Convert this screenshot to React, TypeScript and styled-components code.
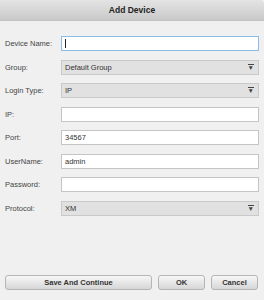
import React from "react";
import styled, { createGlobalStyle } from "styled-components";

const GlobalStyle = createGlobalStyle`
  html, body {
    margin: 0;
    padding: 0;
    background: #f0f0f0;
  }
  * {
    box-sizing: border-box;
  }
`;

type Field = {
  label: string;
  kind: "text" | "select";
  value?: string;
  focused?: boolean;
};

const fields: Field[] = [
  { label: "Device Name:", kind: "text", focused: true },
  { label: "Group:", kind: "select", value: "Default Group" },
  { label: "Login Type:", kind: "select", value: "IP" },
  { label: "IP:", kind: "text" },
  { label: "Port:", kind: "text", value: "34567" },
  { label: "UserName:", kind: "text", value: "admin" },
  { label: "Password:", kind: "text" },
  { label: "Protocol:", kind: "select", value: "XM" },
];

function App() {
  return (
    <React.Fragment>
      <GlobalStyle />
      <Window>
        <TitleBar>Add Device</TitleBar>
        <Form>
          {fields.map((field) => (
            <Row key={field.label}>
              <Label>{field.label}</Label>
              {field.kind === "select" ? (
                <Select>
                  <span>{field.value}</span>
                  <Arrow>▼</Arrow>
                </Select>
              ) : (
                <TextBox $focused={field.focused}>
                  {field.value}
                  {field.focused && <Caret />}
                </TextBox>
              )}
            </Row>
          ))}
        </Form>
        <Footer>
          <Button $width={147}>Save And Continue</Button>
          <Button $width={47}>OK</Button>
          <Button $width={47}>Cancel</Button>
        </Footer>
      </Window>
    </React.Fragment>
  );
}

export default App;

const Window = styled.div`
  width: 264px;
  height: 300px;
  display: flex;
  flex-direction: column;
  background: #f0f0f0;
  font-family: "Liberation Sans", Arial, sans-serif;
`;

const TitleBar = styled.div`
  height: 21px;
  display: flex;
  align-items: center;
  justify-content: center;
  background: linear-gradient(to bottom, #e4e4e4, #c9c9c9);
  border-top-right-radius: 4px;
  border-bottom: 1px solid #c2c2c2;
  font-size: 8.5px;
  font-weight: bold;
  color: #222;
`;

const Form = styled.div`
  display: flex;
  flex-direction: column;
  gap: 8.5px;
  padding: 15px 5px 0 5px;
`;

const Row = styled.div`
  display: grid;
  grid-template-columns: 56px 198px;
  align-items: center;
`;

const Label = styled.div`
  font-size: 7.5px;
  color: #444;
`;

const TextBox = styled.div<{ $focused?: boolean }>`
  height: 15px;
  display: flex;
  align-items: center;
  padding: 0 3px;
  background: #ffffff;
  border: 1px solid ${(p) => (p.$focused ? "#8cbde6" : "#c4c4c4")};
  font-size: 7.5px;
  color: #333;
`;

const Caret = styled.span`
  width: 1px;
  height: 9px;
  background: #222;
`;

const Select = styled.div`
  height: 15px;
  display: flex;
  align-items: center;
  justify-content: space-between;
  padding: 0 4px 0 3px;
  background: #e1e1e1;
  border: 1px solid #c9c9c9;
  font-size: 7.5px;
  color: #333;
`;

const Arrow = styled.span`
  font-size: 6.5px;
  color: #444;
  border-top: 1px solid #444;
  line-height: 6px;
`;

const Footer = styled.div`
  margin-top: auto;
  display: flex;
  gap: 6px;
  padding: 0 5px 10px 5px;
`;

const Button = styled.div<{ $width: number }>`
  width: ${(p) => p.$width}px;
  height: 15px;
  display: flex;
  align-items: center;
  justify-content: center;
  border: 1px solid #b5b5b5;
  border-radius: 3px;
  background: linear-gradient(to bottom, #f7f7f7, #d6d6d6);
  font-size: 7.5px;
  font-weight: bold;
  color: #333;
`;
